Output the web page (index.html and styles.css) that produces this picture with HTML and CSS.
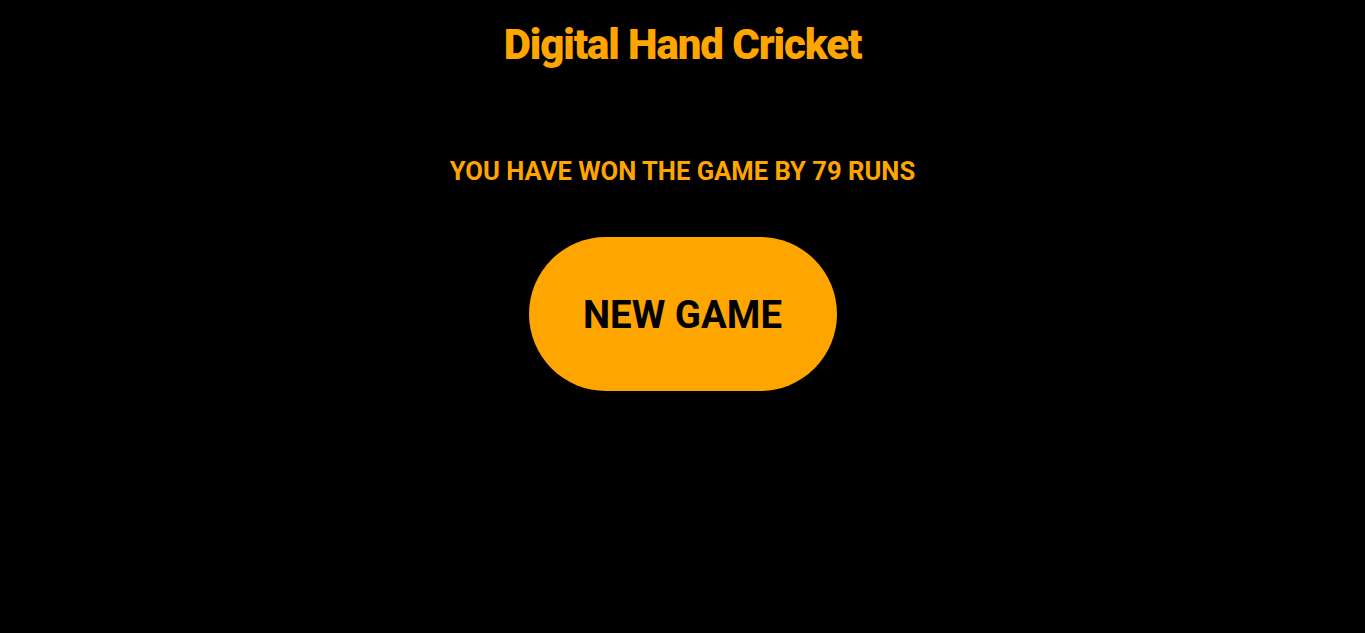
FILE: index.html
```html
<!DOCTYPE html>
<html lang="en">
<head>
<meta charset="utf-8">
<title>Digital Hand Cricket</title>
<link rel="stylesheet" href="styles.css">
</head>
<body>
  <main class="game">
    <h1 class="game-title">Digital Hand Cricket</h1>
    <p class="game-result">YOU HAVE WON THE GAME BY 79 RUNS</p>
    <button class="btn-new-game" type="button">NEW GAME</button>
  </main>
</body>
</html>
```

FILE: styles.css
```css
html, body {
  margin: 0;
  padding: 0;
  background: #000;
  height: 100%;
}

body {
  font-family: Roboto, "Liberation Sans", sans-serif;
  color: #ffa500;
}

.game {
  display: flex;
  flex-direction: column;
  align-items: center;
}

.game-title {
  margin: 22px 0 0;
  font-size: 42px;
  font-weight: 900;
  letter-spacing: -1.1px;
  line-height: 46px;
}

.game-result {
  margin: 88px 0 0;
  font-size: 25.6px;
  font-weight: 700;
  line-height: 30px;
}

.btn-new-game {
  margin-top: 51px;
  width: 308px;
  height: 154px;
  border: none;
  border-radius: 77px;
  background: #ffa500;
  color: #000;
  font-family: Roboto, "Liberation Sans", sans-serif;
  font-size: 38.4px;
  font-weight: 700;
  cursor: pointer;
}
```
